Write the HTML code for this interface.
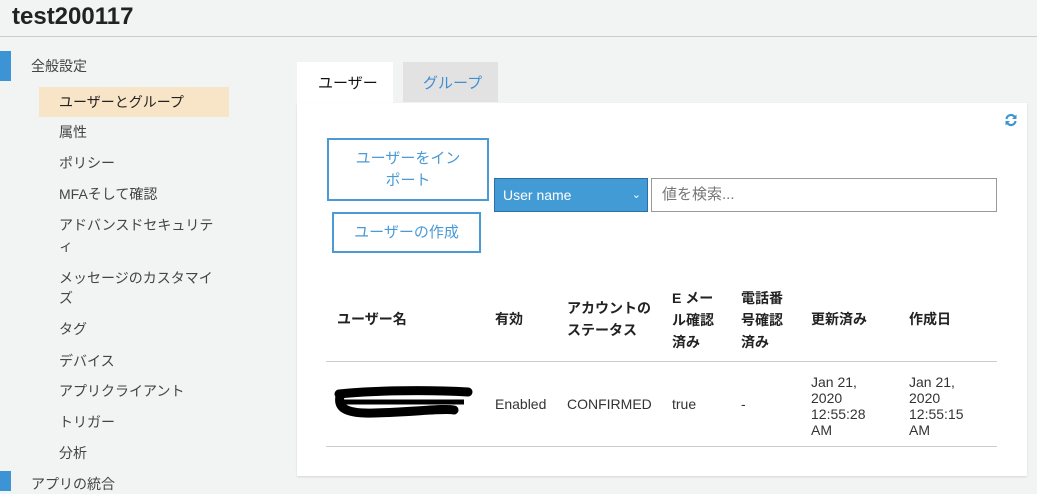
<!DOCTYPE html>
<html><head><meta charset="utf-8"><style>
*{margin:0;padding:0;box-sizing:border-box}
body{width:1037px;height:487px;overflow:hidden;background:#f2f3f3;font-family:"Liberation Sans","Noto Sans CJK JP",sans-serif;color:#333;position:relative;font-size:14px}
.a{position:absolute;white-space:nowrap}
.nav{position:absolute;left:59px;font-size:14px;color:#444;line-height:20px}
.th{position:absolute;font-weight:bold;font-size:14px;line-height:22px;color:#222}
.td{position:absolute;font-size:14px;line-height:18px;color:#333}
</style></head><body>
<div class="a" style="left:12px;top:3px;font-size:24px;font-weight:bold;color:#222">test200117</div>
<div class="a" style="left:0;top:36px;width:1037px;height:1px;background:#ccc"></div>
<div class="a" style="left:0;top:51px;width:11px;height:30px;background:#3d94d4"></div>
<div class="a" style="left:0;top:471px;width:11px;height:20px;background:#3d94d4"></div>
<div class="nav" style="left:31px;top:56px">全般設定</div>
<div class="a" style="left:39px;top:87px;width:190px;height:30px;background:#f8e4c6"></div>
<div class="nav" style="top:92px;color:#222">ユーザーとグループ</div>
<div class="nav" style="top:122px">属性</div>
<div class="nav" style="top:153px">ポリシー</div>
<div class="nav" style="top:184px">MFAそして確認</div>
<div class="nav" style="top:215px">アドバンスドセキュリテ</div>
<div class="nav" style="top:236px">ィ</div>
<div class="nav" style="top:268px">メッセージのカスタマイ</div>
<div class="nav" style="top:288px">ズ</div>
<div class="nav" style="top:319px">タグ</div>
<div class="nav" style="top:351px">デバイス</div>
<div class="nav" style="top:381px">アプリクライアント</div>
<div class="nav" style="top:412px">トリガー</div>
<div class="nav" style="top:443px">分析</div>
<div class="nav" style="left:31px;top:474px">アプリの統合</div>

<div class="a" style="left:297px;top:62px;width:96px;height:42px;background:#fff"></div>
<div class="a" style="left:318px;top:72px;font-size:15px;color:#111">ユーザー</div>
<div class="a" style="left:403px;top:62px;width:95px;height:40px;background:#e3e2e3"></div>
<div class="a" style="left:423px;top:72px;font-size:15px;color:#3f8fcf">グループ</div>
<div class="a" style="left:297px;top:103px;width:730px;height:373px;background:#fff;box-shadow:0 1px 2px rgba(0,0,0,.12)"></div>
<svg class="a" style="left:1004px;top:113px" width="14" height="14" viewBox="0 0 14 14"><path d="M2.5 6A4.5 4.5 0 0 1 11 4.5M11.5 8A4.5 4.5 0 0 1 3 9.5" stroke="#3d94d4" stroke-width="2.2" fill="none"/><path d="M12.5 1.5v4.5h-4.5zM1.5 12.5v-4.5h4.5z" fill="#3d94d4"/></svg>

<div class="a" style="left:327px;top:138px;width:162px;height:63px;border:2px solid #4a9ad6;color:#4a9ad6;text-align:center;font-size:15px;line-height:22px;padding-top:8px">ユーザーをイン<br>ポート</div>
<div class="a" style="left:332px;top:212px;width:149px;height:41px;border:2px solid #4a9ad6;color:#4a9ad6;text-align:center;font-size:15px;line-height:37px">ユーザーの作成</div>
<div class="a" style="left:494px;top:178px;width:154px;height:34px;background:#439bd6;border:1px solid #2e6ea8;color:#fff;font-size:14px;line-height:32px;padding-left:8px">User name<span style="position:absolute;right:6px;top:0;font-size:11px">&#8964;</span></div>
<div class="a" style="left:651px;top:178px;width:346px;height:34px;border:1px solid #999;color:#777;font-size:15px;line-height:32px;padding-left:10px">値を検索...</div>

<div class="th" style="left:337px;top:308px">ユーザー名</div>
<div class="th" style="left:495px;top:308px">有効</div>
<div class="th" style="left:567px;top:297px">アカウントの<br>ステータス</div>
<div class="th" style="left:672px;top:287px">E メー<br>ル確認<br>済み</div>
<div class="th" style="left:741px;top:287px">電話番<br>号確認<br>済み</div>
<div class="th" style="left:811px;top:308px">更新済み</div>
<div class="th" style="left:909px;top:308px">作成日</div>
<div class="a" style="left:326px;top:361px;width:671px;height:1px;background:#ccc"></div>
<div class="a" style="left:326px;top:446px;width:671px;height:1px;background:#ccc"></div>
<div class="td" style="left:495px;top:395px">Enabled</div>
<div class="td" style="left:567px;top:395px">CONFIRMED</div>
<div class="td" style="left:672px;top:395px">true</div>
<div class="td" style="left:741px;top:395px">-</div>
<div class="td" style="left:811px;top:374px;line-height:16px">Jan 21,<br>2020<br>12:55:28<br>AM</div>
<div class="td" style="left:909px;top:374px;line-height:16px">Jan 21,<br>2020<br>12:55:15<br>AM</div>
<svg class="a" style="left:334px;top:386px" width="142" height="38" viewBox="0 0 142 38"><path d="M5 8C40 4 100 4 134 6M6 10C4 20 8 28 40 27C80 26 110 22 120 24" stroke="#000" stroke-width="9" fill="none" stroke-linecap="round"/><path d="M10 16L130 16" stroke="#000" stroke-width="5"/></svg>
</body></html>
